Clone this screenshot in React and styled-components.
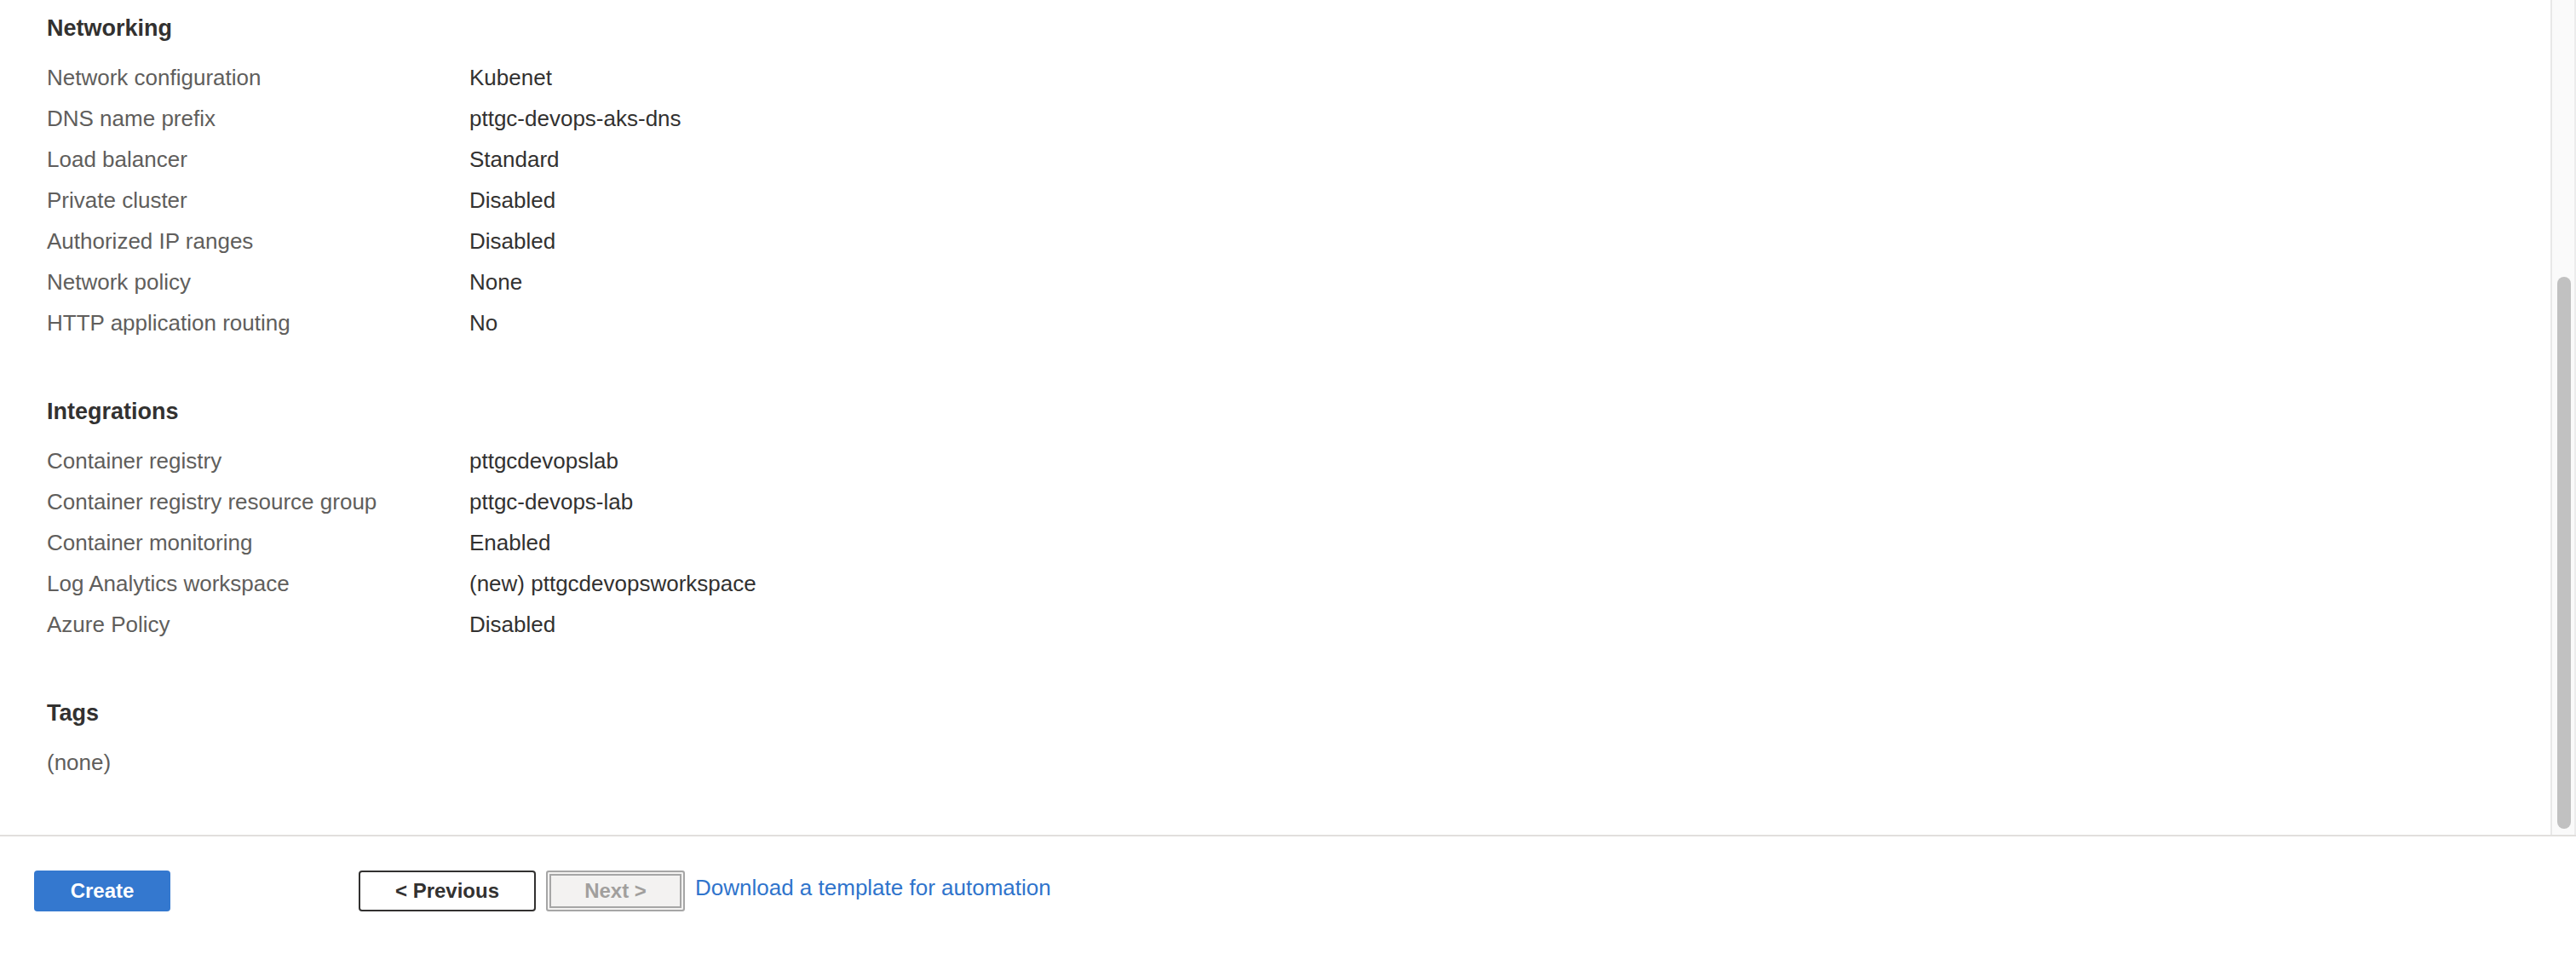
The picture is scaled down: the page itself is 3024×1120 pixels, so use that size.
import React from "react";
import styled, { createGlobalStyle } from "styled-components";

const GlobalStyle = createGlobalStyle`
  html, body {
    margin: 0;
    padding: 0;
    background: #ffffff;
  }
  body {
    font-family: "Liberation Sans", Arial, sans-serif;
    color: #323130;
    overflow: hidden;
  }
  * { box-sizing: border-box; }
`;

const Page = styled.div`
  width: 3024px;
  height: 1120px;
  display: flex;
  flex-direction: column;
  background: #ffffff;
`;

const ScrollArea = styled.div`
  height: 982px;
  display: flex;
  flex-direction: row;
  border-bottom: 2px solid #e1dfdd;
`;

const Content = styled.div`
  flex: 1;
  overflow: hidden;
  padding: 13px 0 0 55px;
`;

const Section = styled.section`
  & + & {
    margin-top: 60px;
  }
`;

const Heading = styled.h2`
  margin: 0 0 14px 0;
  font-size: 27px;
  line-height: 40px;
  font-weight: 700;
  color: #323130;
`;

const Rows = styled.div`
  display: grid;
  grid-template-columns: 496px 1fr;
  font-size: 26px;
  line-height: 48px;
`;

const Label = styled.div`
  color: #605e5c;
  white-space: nowrap;
`;

const Value = styled.div`
  color: #323130;
  white-space: nowrap;
`;

const Empty = styled.div`
  grid-column: 1 / -1;
  color: #605e5c;
`;

const Scrollbar = styled.div`
  width: 30px;
  height: 100%;
  background: #fafafa;
  border-left: 2px solid #e8e8e8;
  border-right: 2px solid #ececec;
  padding-left: 6px;
`;

const Thumb = styled.div`
  width: 16px;
  border-radius: 8px;
  background: #c1c1c1;
`;

const Footer = styled.footer`
  flex: 1;
  display: flex;
  align-items: center;
  align-self: stretch;
  height: 138px;
  padding: 0 0 20px 40px;
  align-items: flex-start;
  padding-top: 40px;
`;

const ButtonBase = styled.button`
  height: 48px;
  font-family: "Liberation Sans", Arial, sans-serif;
  font-size: 24px;
  font-weight: 700;
  border-radius: 4px;
  padding: 0;
  cursor: pointer;
`;

const PrimaryButton = styled(ButtonBase)`
  width: 160px;
  background: #3478cf;
  color: #ffffff;
  border: none;
  margin-right: 221px;
`;

const NavGroup = styled.div`
  display: flex;
  align-items: center;
  gap: 12px;
  height: 48px;
`;

const NavButton = styled(ButtonBase)`
  width: ${(p) => p.$width}px;
  background: ${(p) => (p.disabled ? "#f3f2f1" : "#ffffff")};
  color: ${(p) => (p.disabled ? "#a19f9d" : "#323130")};
  border: 2px solid ${(p) => (p.disabled ? "#a6a6a6" : "#323130")};
  box-shadow: ${(p) =>
    p.disabled ? "inset 0 0 0 2px #f3f2f1, inset 0 0 0 4px #a6a6a6" : "none"};
  border-radius: ${(p) => (p.disabled ? "3px" : "4px")};
  cursor: ${(p) => (p.disabled ? "default" : "pointer")};
`;

const TemplateLink = styled.a`
  font-size: 26px;
  line-height: 36px;
  color: #2f74cc;
  text-decoration: none;
  padding-bottom: 8px;
  cursor: pointer;
  white-space: nowrap;
`;

const sections = [
  {
    title: "Networking",
    rows: [
      ["Network configuration", "Kubenet"],
      ["DNS name prefix", "pttgc-devops-aks-dns"],
      ["Load balancer", "Standard"],
      ["Private cluster", "Disabled"],
      ["Authorized IP ranges", "Disabled"],
      ["Network policy", "None"],
      ["HTTP application routing", "No"],
    ],
  },
  {
    title: "Integrations",
    rows: [
      ["Container registry", "pttgcdevopslab"],
      ["Container registry resource group", "pttgc-devops-lab"],
      ["Container monitoring", "Enabled"],
      ["Log Analytics workspace", "(new) pttgcdevopsworkspace"],
      ["Azure Policy", "Disabled"],
    ],
  },
];

export default function App() {
  const thumb = { top: 325, height: 648 };
  return (
    <>
      <GlobalStyle />
      <Page>
        <ScrollArea>
          <Content>
            {sections.map((s) => (
              <Section key={s.title}>
                <Heading>{s.title}</Heading>
                <Rows>
                  {s.rows.map(([label, value]) => (
                    <React.Fragment key={label}>
                      <Label>{label}</Label>
                      <Value>{value}</Value>
                    </React.Fragment>
                  ))}
                </Rows>
              </Section>
            ))}
            <Section>
              <Heading>Tags</Heading>
              <Rows>
                <Empty>(none)</Empty>
              </Rows>
            </Section>
          </Content>
          <Scrollbar>
            <Thumb style={{ marginTop: thumb.top, height: thumb.height }} />
          </Scrollbar>
        </ScrollArea>
        <Footer>
          <PrimaryButton>Create</PrimaryButton>
          <NavGroup>
            <NavButton $width={208}>&lt; Previous</NavButton>
            <NavButton $width={163} disabled>
              Next &gt;
            </NavButton>
            <TemplateLink>Download a template for automation</TemplateLink>
          </NavGroup>
        </Footer>
      </Page>
    </>
  );
}
